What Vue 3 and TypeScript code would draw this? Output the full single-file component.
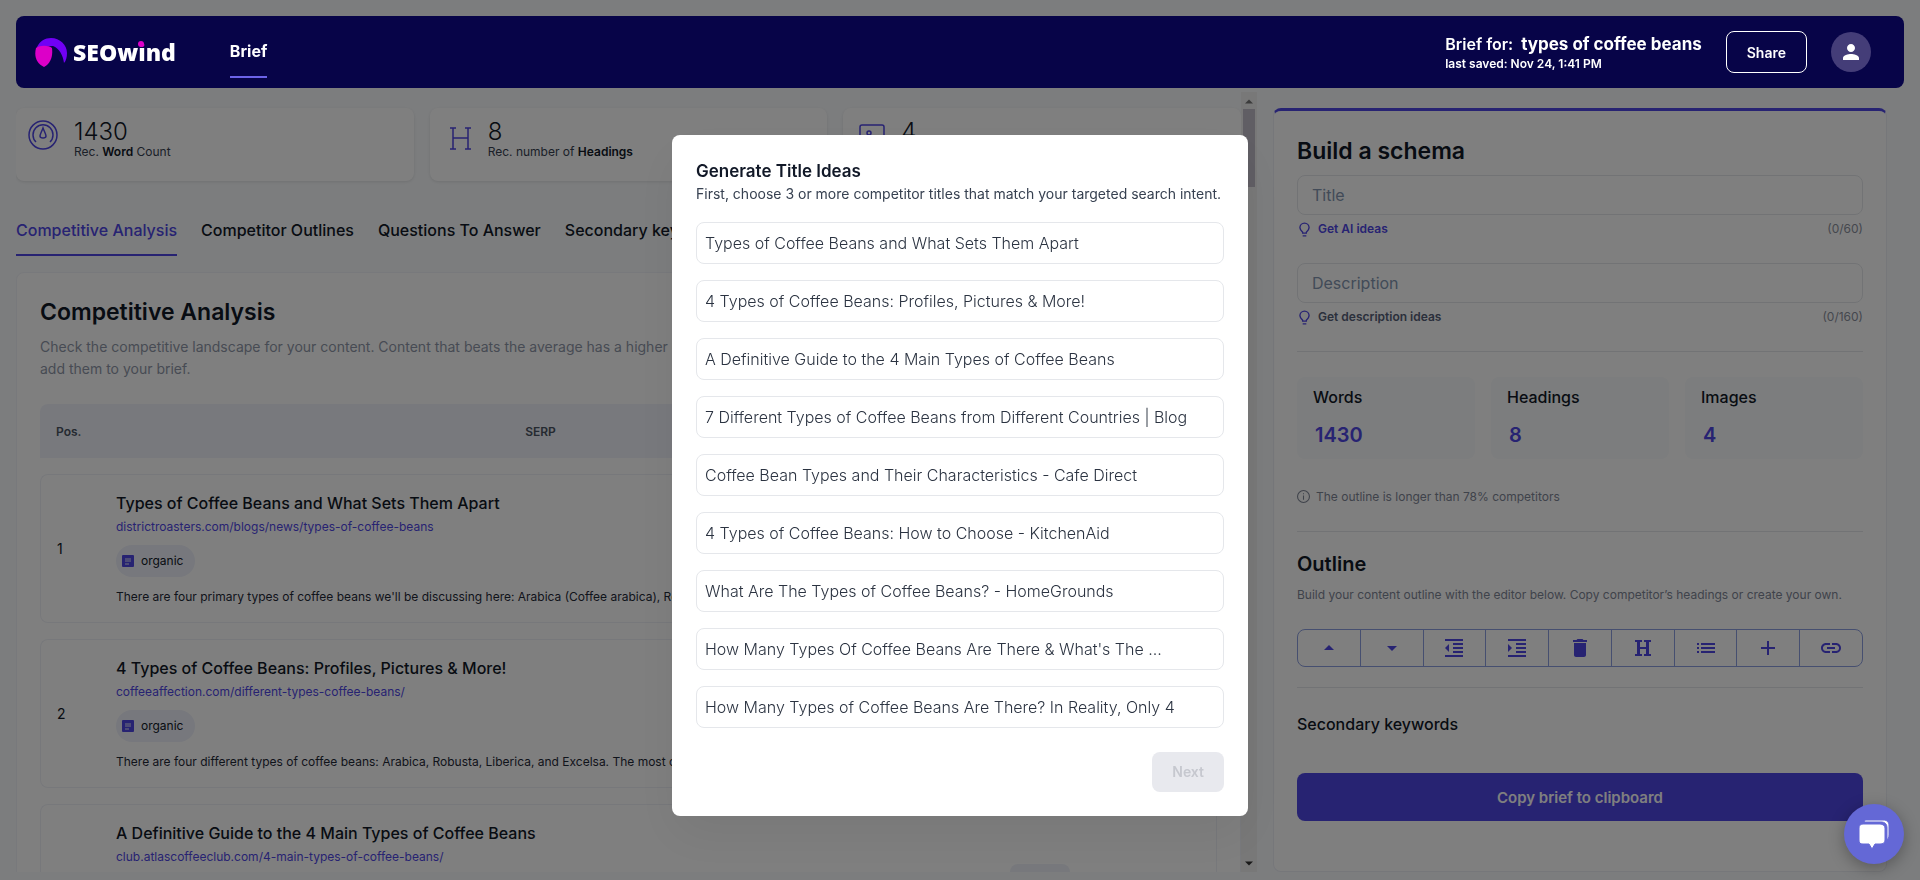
<script setup lang="ts">
import { ref } from 'vue'

interface Competitor {
  pos: number
  title: string
  url: string
  text: string
}

const tabs = ['Competitive Analysis', 'Competitor Outlines', 'Questions To Answer', 'Secondary keywords']

const competitors: Competitor[] = [
  {
    pos: 1,
    title: 'Types of Coffee Beans and What Sets Them Apart',
    url: 'districtroasters.com/blogs/news/types-of-coffee-beans',
    text: "There are four primary types of coffee beans we'll be discussing here: Arabica (Coffee arabica), Robusta, Excelsa and Liberica.",
  },
  {
    pos: 2,
    title: '4 Types of Coffee Beans: Profiles, Pictures & More!',
    url: 'coffeeaffection.com/different-types-coffee-beans/',
    text: 'There are four different types of coffee beans: Arabica, Robusta, Liberica, and Excelsa. The most common are Arabica and Robusta.',
  },
  {
    pos: 3,
    title: 'A Definitive Guide to the 4 Main Types of Coffee Beans',
    url: 'club.atlascoffeeclub.com/4-main-types-of-coffee-beans/',
    text: 'The four main coffee types are Arabica, Robusta, Excelsa, and Liberica.',
  },
]

const stats = [
  { label: 'Words', value: 1430 },
  { label: 'Headings', value: 8 },
  { label: 'Images', value: 4 },
]

const tools = [
  { name: 'Move up', path: 'M7 14l5-5 5 5z' },
  { name: 'Move down', path: 'M7 10l5 5 5-5z' },
  { name: 'Outdent', path: 'M11 17h10v-2H11v2zm-8-5l4 4V8l-4 4zm0 9h18v-2H3v2zM3 3v2h18V3H3zm8 6h10V7H11v2zm0 4h10v-2H11v2z' },
  { name: 'Indent', path: 'M3 21h18v-2H3v2zM3 8v8l4-4-4-4zm8 9h10v-2H11v2zM3 3v2h18V3H3zm8 6h10V7H11v2zm0 4h10v-2H11v2z' },
  { name: 'Delete', path: 'M6 19c0 1.100.9 2 2 2h8c1.100 0 2-.9 2-2V7H6v12zM19 4h-3.500l-1-1h-5l-1 1H5v2h14V4z' },
  { name: 'Heading', path: 'M4 4h7v2H9v5h6V6h-2V4h7v2h-2v12h2v2h-7v-2h2v-5H9v5h2v2H4v-2h2V6H4z' },
  { name: 'List', path: 'M3 13h2v-2H3v2zm0 4h2v-2H3v2zm0-8h2V7H3v2zm4 4h14v-2H7v2zm0 4h14v-2H7v2zM7 7v2h14V7H7z' },
  { name: 'Add', path: 'M19 13h-6v6h-2v-6H5v-2h6V5h2v6h6v2z' },
  { name: 'Link', path: 'M3.900 12c0-1.710 1.390-3.100 3.100-3.100h4V7H7c-2.760 0-5 2.240-5 5s2.240 5 5 5h4v-1.900H7c-1.710 0-3.100-1.390-3.100-3.100zM8 13h8v-2H8v2zm9-6h-4v1.900h4c1.710 0 3.100 1.390 3.100 3.100s-1.390 3.100-3.100 3.100h-4V17h4c2.760 0 5-2.240 5-5s-2.240-5-5-5z' },
]

const titles = [
  'Types of Coffee Beans and What Sets Them Apart',
  '4 Types of Coffee Beans: Profiles, Pictures & More!',
  'A Definitive Guide to the 4 Main Types of Coffee Beans',
  '7 Different Types of Coffee Beans from Different Countries | Blog',
  'Coffee Bean Types and Their Characteristics - Cafe Direct',
  '4 Types of Coffee Beans: How to Choose - KitchenAid',
  'What Are The Types of Coffee Beans? - HomeGrounds',
  "How Many Types Of Coffee Beans Are There & What's The ...",
  'How Many Types of Coffee Beans Are There? In Reality, Only 4',
]

const activeTab = ref(tabs[0])
const chosen = ref<string[]>([])
const seoTitle = ref('')
const seoDescription = ref('')

function toggle(title: string) {
  chosen.value = chosen.value.includes(title)
    ? chosen.value.filter((t) => t !== title)
    : [...chosen.value, title]
}
</script>

<template>
  <div class="page">
    <header class="topbar">
      <a class="logo" href="#" aria-label="SEOwind">
        <svg class="logo-mark" viewBox="0 0 32 29" aria-hidden="true">
          <path d="M2 9C5 3 10 0 16 0c9 0 16 7 16 15 0 4-1 8-3 10-1-8-5-15-11-17z" fill="#7100f5" />
          <path d="M1 10c3-3 13-3 16 0 1 8-1 15-8 19C1 25-1 18 1 10z" fill="#dc00c8" />
        </svg>
        <span class="logo-text">SEOw<span class="logo-i">i</span>nd</span>
      </a>
      <nav class="topnav"><a href="#">Brief</a></nav>
      <div class="brief">
        <div class="brief-name"><span>Brief for:</span><strong>types of coffee beans</strong></div>
        <div class="brief-saved">last saved: Nov 24, 1:41 PM</div>
      </div>
      <button class="share" type="button">Share</button>
      <button class="avatar" type="button" aria-label="Account">
        <svg viewBox="0 0 24 24"><path d="M12 12c2.200 0 4-1.800 4-4s-1.800-4-4-4-4 1.800-4 4 1.800 4 4 4zm0 2c-2.700 0-8 1.300-8 4v2h16v-2c0-2.700-5.300-4-8-4z" fill="#fff" /></svg>
      </button>
    </header>

    <div class="columns">
      <main class="left">
        <div class="scroller">
          <section class="summary">
            <div class="card">
              <svg class="card-icon" viewBox="0 0 30 30">
                <circle cx="15" cy="15" r="14" />
                <path d="M8 22a10 10 0 1 1 14 0M15 8c-1 3-3 6-3 8a3 2 0 0 0 6 0c0-2-2-5-3-8z" />
              </svg>
              <div><div class="num">1430</div><div class="cap">Rec. <b>Word</b> Count</div></div>
            </div>
            <div class="card">
              <svg class="card-icon" viewBox="0 0 30 30">
                <path d="M8 8h6M23 8h6M8 29h6M23 29h6M11 8v21M26 8v21M11 18h15" />
              </svg>
              <div><div class="num">8</div><div class="cap">Rec. number of <b>Headings</b></div></div>
            </div>
            <div class="card">
              <svg class="card-icon" viewBox="0 0 30 30">
                <rect x="5" y="5" width="24" height="22" rx="2" />
                <circle cx="14" cy="13" r="2" />
                <path d="M5 23l7-5 5 4 6-6 6 5" />
              </svg>
              <div><div class="num">4</div><div class="cap">Rec. number of <b>Images</b></div></div>
            </div>
          </section>

          <div class="tabs" role="tablist">
            <button
              v-for="t in tabs"
              :key="t"
              type="button"
              role="tab"
              class="tab"
              :class="{ active: t === activeTab }"
              :aria-selected="t === activeTab"
              @click="activeTab = t"
            >{{ t }}</button>
          </div>

          <section class="panel">
            <h1>Competitive Analysis</h1>
            <p class="lead">
              Check the competitive landscape for your content. Content that beats the average has a higher chance of ranking. Pick sections and<br />
              add them to your brief.
            </p>
            <table class="serp">
              <colgroup><col class="c-pos" /><col /><col class="c-score" /><col class="c-score" /></colgroup>
              <thead>
                <tr><th scope="col" class="pos">Pos.</th><th scope="col">SERP</th><td></td><td></td></tr>
              </thead>
              <tbody>
                <tr v-for="c in competitors" :key="c.pos">
                  <td class="pos">{{ c.pos }}</td>
                  <td>
                    <div class="r-title">{{ c.title }}</div>
                    <a class="r-url" href="#">{{ c.url }}</a>
                    <div class="pill">
                      <svg viewBox="0 0 12 12"><rect width="12" height="12" rx="1" fill="#4f46e5" /><path d="M3 4h6M3 6h6M3 9h4" stroke="#e5e9f5" /></svg>
                      organic
                    </div>
                    <div class="r-text">{{ c.text }}</div>
                  </td>
                  <td><span class="score"></span></td>
                  <td></td>
                </tr>
              </tbody>
            </table>
          </section>
        </div>
        <div class="scrollbar" aria-hidden="true">
          <svg viewBox="0 0 16 16"><path d="M4 11l4-4 4 4z" fill="#777" /></svg>
          <div class="thumb"></div>
          <svg class="down" viewBox="0 0 16 16"><path d="M4 6l4 4 4-4z" fill="#333" /></svg>
        </div>
      </main>

      <aside class="schema">
        <h2>Build a schema</h2>
        <input v-model="seoTitle" type="text" placeholder="Title" aria-label="Title" />
        <div class="hint">
          <button type="button" class="idea">
            <svg viewBox="0 0 12 16"><path d="M4 11C2 9 1 8 1 6a5 5 0 0 1 10 0c0 2-1 3-3 5v1H4zM4 15h4" /></svg>
            Get AI ideas
          </button>
          <span>(0/60)</span>
        </div>
        <input v-model="seoDescription" type="text" placeholder="Description" aria-label="Description" />
        <div class="hint">
          <button type="button" class="idea muted">
            <svg viewBox="0 0 12 16"><path d="M4 11C2 9 1 8 1 6a5 5 0 0 1 10 0c0 2-1 3-3 5v1H4zM4 15h4" /></svg>
            Get description ideas
          </button>
          <span>(0/160)</span>
        </div>
        <hr />
        <div class="stats">
          <div v-for="s in stats" :key="s.label" class="stat">
            <div class="s-label">{{ s.label }}</div>
            <div class="s-value">{{ s.value }}</div>
          </div>
        </div>
        <div class="info">
          <svg viewBox="0 0 12 12"><circle cx="6" cy="6" r="5.500" /><path d="M6 5v4M6 3v1" /></svg>
          The outline is longer than 78% competitors
        </div>
        <hr />
        <h3>Outline</h3>
        <p class="small">Build your content outline with the editor below. Copy competitor’s headings or create your own.</p>
        <div class="toolbar" role="toolbar" aria-label="Outline editor">
          <button v-for="t in tools" :key="t.name" type="button" :aria-label="t.name">
            <svg viewBox="0 0 24 24"><path :d="t.path" /></svg>
          </button>
        </div>
        <hr />
        <h4>Secondary keywords</h4>
        <button class="copy" type="button">Copy brief to clipboard</button>
      </aside>
    </div>

    <div class="overlay">
      <section class="modal" role="dialog" aria-modal="true" aria-labelledby="modal-title">
        <h2 id="modal-title">Generate Title Ideas</h2>
        <p>First, choose 3 or more competitor titles that match your targeted search intent.</p>
        <div class="choices">
          <button
            v-for="t in titles"
            :key="t"
            type="button"
            class="choice"
            :class="{ chosen: chosen.includes(t) }"
            :aria-pressed="chosen.includes(t)"
            @click="toggle(t)"
          >{{ t }}</button>
        </div>
        <button class="next" type="button" :disabled="chosen.length < 3">Next</button>
      </section>
    </div>

    <button class="chat" type="button" aria-label="Open chat">
      <svg viewBox="0 0 32 30">
        <path d="M7 1h18c4 0 6 2 6 6v9c0 2-1 4-2 5V9c0-4-2-6-6-6H6z" fill="#fff" />
        <path d="M5 5h17c3 0 5 2 5 4v12c0 3-2 4-5 4h-5l-3 5-3-5H5c-3 0-4-1-4-4V9c0-2 1-4 4-4z" fill="#fff" />
      </svg>
    </button>
  </div>
</template>

<style>
body {
  margin: 0;
  overflow: hidden;
}
</style>

<style scoped>
.page,
.page * {
  box-sizing: border-box;
}
.page {
  height: 100vh;
  display: flex;
  flex-direction: column;
  padding: 16px 16px 8px;
  background: #f8fafc;
  color: #111827;
  font-family: Inter, "Liberation Sans", sans-serif;
  font-size: 16px;
}
h1, h2, h3, h4, p {
  margin: 0;
}
button, input {
  font: inherit;
}
button {
  padding: 0;
  border: 0;
  background: none;
  color: inherit;
  cursor: pointer;
}
a {
  text-decoration: none;
}

/* top bar */
.topbar {
  position: relative;
  z-index: 2;
  flex: none;
  display: flex;
  align-items: center;
  height: 72px;
  padding: 0 33px 0 19px;
  border-radius: 8px;
  background: #070448;
  color: #fff;
}
.logo {
  display: flex;
  align-items: center;
  gap: 6px;
  color: #fff;
}
.logo-mark {
  width: 32px;
  height: 29px;
}
.logo-text {
  font-family: "Open Sans", sans-serif;
  font-weight: 800;
  font-size: 23px;
  line-height: 32px;
}
.logo-i {
  position: relative;
  background: linear-gradient(#dc00c8 12px, #fff 12px);
  background-clip: text;
  -webkit-background-clip: text;
  color: transparent;
}
.logo-i::after {
  content: "";
  position: absolute;
  left: 0;
  top: 5px;
  width: 6px;
  height: 6px;
  border-radius: 50%;
  background: #dc00c8;
}
.topnav {
  margin-left: 54px;
  align-self: stretch;
  display: flex;
  align-items: flex-start;
}
.topnav a {
  height: 62px;
  padding-top: 23px;
  line-height: 24px;
  border-bottom: 2px solid #6c63e8;
  color: #fff;
  font-weight: 700;
}
.brief {
  margin-left: auto;
}
.brief-name {
  display: flex;
  gap: 8px;
  align-items: baseline;
  line-height: 24px;
  font-weight: 600;
}
.brief-name strong {
  font-size: 17px;
  font-weight: 700;
}
.brief-saved {
  font-size: 12px;
  line-height: 16px;
  font-weight: 600;
}
.share {
  margin-left: 24px;
  height: 42px;
  padding: 0 20px;
  border: 1px solid #fff;
  border-radius: 8px;
  font-size: 14px;
  font-weight: 600;
}
.avatar {
  margin-left: 24px;
  width: 40px;
  height: 40px;
  border-radius: 50%;
  background: #443d78;
  display: grid;
  place-items: center;
}
.avatar svg {
  width: 24px;
  height: 24px;
}

/* body */
.columns {
  flex: 1;
  min-height: 0;
  display: grid;
  grid-template-columns: minmax(0, 669fr) minmax(0, 331fr);
  gap: 16px;
  padding-right: 17px;
}
.left {
  min-width: 0;
  min-height: 0;
  display: flex;
  margin-top: 4px;
}
.scroller {
  flex: 1;
  min-width: 0;
  overflow: hidden;
  padding-top: 16px;
}
.scrollbar {
  width: 16px;
  display: flex;
  flex-direction: column;
  background: #f1f1f1;
}
.scrollbar svg {
  width: 16px;
  height: 17px;
}
.thumb {
  height: 78px;
  margin: 0 2px;
  background: #c1bcc8;
}
.down {
  margin-top: auto;
}
.summary {
  display: grid;
  grid-template-columns: repeat(3, 1fr);
  gap: 16px;
}
.card {
  height: 73px;
  padding: 12px;
  display: flex;
  gap: 16px;
  border-radius: 8px;
  background: #fff;
  box-shadow: 0 1px 3px rgba(0, 0, 0, 0.1);
}
.card-icon {
  width: 30px;
  height: 30px;
  fill: none;
  stroke: #4f46e5;
  stroke-width: 1.500;
}
.num {
  font-size: 24px;
  line-height: 24px;
  font-weight: 300;
}
.cap {
  font-size: 12px;
  line-height: 16px;
  color: #374151;
}
.cap b {
  font-weight: 600;
  color: #111827;
}
.tabs {
  display: flex;
  gap: 24px;
  margin-top: 36px;
}
.tab {
  height: 39px;
  padding-bottom: 12px;
  line-height: 24px;
  font-weight: 500;
  white-space: nowrap;
  border-bottom: 2px solid transparent;
}
.tab.active {
  border-color: #4f46e5;
  color: #4f46e5;
}
.panel {
  margin-top: 16px;
  padding: 23px;
  border: 1px solid #f1f3f8;
  border-radius: 8px;
  background: #fff;
}
.panel h1 {
  font-size: 23px;
  line-height: 32px;
  font-weight: 600;
}
.lead {
  margin-top: 8px;
  font-size: 14px;
  line-height: 22px;
  color: #8f97a8;
  white-space: nowrap;
}
.serp {
  width: 100%;
  margin-top: 8px;
  table-layout: fixed;
  border-collapse: separate;
  border-spacing: 0 16px;
}
.c-pos {
  width: 60px;
}
.c-score {
  width: 118px;
}
.serp thead tr > * {
  height: 54px;
  padding: 0;
  background: #f1f3fb;
  font-size: 12px;
  font-weight: 600;
  color: #4b5563;
}
.serp thead tr > :first-child {
  border-top-left-radius: 8px;
}
.serp thead tr > :last-child {
  border-top-right-radius: 8px;
}
.serp .pos {
  padding-left: 16px;
  text-align: left;
  font-size: 14px;
}
.serp thead .pos {
  font-size: 12px;
}
.serp tbody td {
  height: 149px;
  padding: 0 16px;
  border: solid #eff1f7;
  border-width: 1px 0;
}
.serp tbody td:first-child {
  border-left-width: 1px;
  border-radius: 8px 0 0 8px;
}
.serp tbody td:last-child {
  border-right-width: 1px;
  border-radius: 0 8px 8px 0;
}
.r-title {
  line-height: 24px;
  font-weight: 450;
}
.r-url {
  display: block;
  font-size: 12px;
  line-height: 24px;
  color: #4f46e5;
}
.pill {
  display: inline-flex;
  align-items: center;
  gap: 7px;
  height: 32px;
  margin-top: 6px;
  padding: 0 12px 0 6px;
  border-radius: 16px;
  background: #eef1fa;
  font-size: 12px;
}
.pill svg {
  width: 12px;
  height: 12px;
}
.r-text {
  margin-top: 10px;
  font-size: 12px;
  line-height: 20px;
  color: #1f2937;
  white-space: nowrap;
  overflow: hidden;
}
.score {
  display: block;
  width: 60px;
  height: 30px;
  margin: 0 auto;
  border-radius: 8px;
  background: #eef1f8;
}

/* schema panel */
.schema {
  min-width: 0;
  margin-top: 20px;
  padding: 24px 23px 0;
  border: 1px solid #eceef5;
  border-top: 3px solid #4f46e5;
  border-radius: 8px;
  background: #fff;
}
.schema h2 {
  font-size: 23px;
  line-height: 32px;
  font-weight: 600;
  margin-bottom: 8px;
}
.schema input {
  display: block;
  width: 100%;
  height: 40px;
  padding: 0 14px;
  border: 1px solid #e5e7eb;
  border-radius: 8px;
  background: transparent;
}
.schema input::placeholder {
  color: #8496b0;
  opacity: 1;
}
.hint {
  display: flex;
  justify-content: space-between;
  height: 28px;
  margin-bottom: 20px;
  font-size: 12px;
  line-height: 28px;
  color: #8a8f9c;
}
.idea {
  display: flex;
  align-items: center;
  gap: 8px;
  padding-left: 2px;
  color: #4f46e5;
  font-weight: 600;
}
.idea.muted {
  color: #566078;
}
.idea svg {
  width: 11px;
  height: 15px;
  fill: none;
  stroke: #4f46e5;
  stroke-width: 1.500;
}
hr {
  height: 1px;
  margin: 0;
  border: 0;
  background: #e5e7eb;
}
.stats {
  display: grid;
  grid-template-columns: repeat(3, 1fr);
  gap: 16px;
  margin: 25px 0 26px;
}
.stat {
  height: 82px;
  padding: 8px 16px;
  border-radius: 8px;
  background: #f8fafc;
}
.s-label {
  line-height: 24px;
  font-weight: 500;
}
.s-value {
  margin-top: 12px;
  padding-left: 2px;
  font-size: 20px;
  line-height: 28px;
  font-weight: 600;
  color: #4f46e5;
}
.info {
  display: flex;
  align-items: center;
  gap: 6px;
  height: 22px;
  margin-bottom: 24px;
  font-size: 12px;
  color: #7f8696;
}
.info svg {
  width: 13px;
  height: 13px;
  fill: none;
  stroke: #7f8696;
}
h3 {
  margin-top: 18px;
  font-size: 20px;
  line-height: 28px;
  font-weight: 600;
}
.small {
  margin-top: 8px;
  font-size: 12px;
  line-height: 18px;
  color: #7f8696;
  white-space: nowrap;
}
.toolbar {
  display: flex;
  height: 38px;
  margin: 25px 0 20px;
  border: 1px solid #8d9fe0;
  border-radius: 8px;
}
.toolbar button {
  flex: 1;
  display: grid;
  place-items: center;
}
.toolbar button + button {
  border-left: 1px solid #8d9fe0;
}
.toolbar svg {
  width: 24px;
  height: 24px;
  fill: #4f46e5;
}
h4 {
  margin: 24px 0 37px;
  line-height: 24px;
  font-weight: 450;
}
.copy {
  width: 100%;
  height: 48px;
  border-radius: 8px;
  background: #4f46e5;
  color: #fff;
  font-size: 15px;
  font-weight: 600;
}

/* dialog */
.overlay {
  position: fixed;
  inset: 0;
  z-index: 1;
  display: flex;
  align-items: center;
  justify-content: center;
  padding-top: 70px;
  background: rgba(0, 0, 0, 0.5);
}
.modal {
  display: flex;
  flex-direction: column;
  width: 576px;
  padding: 24px;
  border-radius: 8px;
  background: #fff;
  box-shadow: 0 20px 50px rgba(0, 0, 0, 0.06);
}
.modal h2 {
  font-size: 17px;
  line-height: 24px;
  font-weight: 600;
}
.modal p {
  font-size: 14px;
  line-height: 22px;
  color: #374151;
  white-space: nowrap;
}
.choices {
  display: flex;
  flex-direction: column;
  gap: 16px;
  margin: 17px 0 24px;
}
.choice {
  height: 42px;
  padding: 0 8px;
  border: 1px solid #e5e7eb;
  border-radius: 8px;
  text-align: left;
  font-weight: 350;
  color: #2b3341;
}
.choice.chosen {
  border-color: #4f46e5;
}
.next {
  align-self: flex-end;
  height: 40px;
  padding: 0 20px;
  border-radius: 8px;
  background: #4f46e5;
  color: #fff;
  font-size: 14px;
  font-weight: 600;
}
.next:disabled {
  background: #e8e9ee;
  color: #c6c8cf;
}

.chat {
  position: fixed;
  right: 16px;
  bottom: 16px;
  z-index: 3;
  display: grid;
  place-items: center;
  width: 60px;
  height: 60px;
  border-radius: 50%;
  background: #6468d6;
  box-shadow: 0 4px 16px rgba(0, 0, 0, 0.3);
}
.chat svg {
  width: 32px;
  height: 30px;
  stroke: #6468d6;
  stroke-width: 1;
}
</style>
